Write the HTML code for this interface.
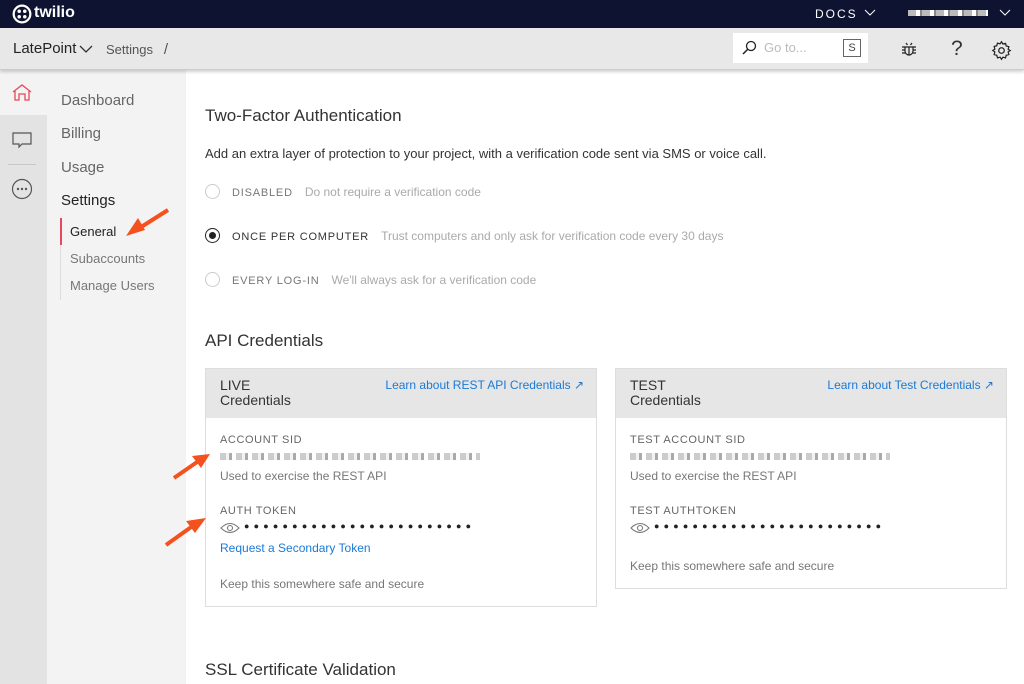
<!DOCTYPE html>
<html><head><meta charset="utf-8"><style>
*{margin:0;padding:0;box-sizing:border-box}
body{width:1024px;height:684px;overflow:hidden;font-family:"Liberation Sans",sans-serif;background:#fff;position:relative;color:#222}
.abs{position:absolute}
#top{left:0;top:0;width:1024px;height:28px;background:#0e1332}
#bar{left:0;top:28px;width:1024px;height:42px;background:#e8e8e8;border-bottom:1px solid #ccc;box-shadow:0 2px 3px rgba(0,0,0,.18);z-index:2}
#rail{left:0;top:70px;width:47px;height:614px;background:#e3e3e3}
#side{left:47px;top:70px;width:139px;height:614px;background:#f3f3f3}
.nav{position:absolute;left:61px;font-size:15px;color:#666}
.sub{position:absolute;left:70px;font-size:13px;color:#777}
.h{position:absolute;left:205px;font-size:17px;color:#333}
.radio{position:absolute;left:205px;width:15px;height:15px;border:1px solid #ccc;border-radius:50%}
.rl{position:absolute;left:232px;font-size:11px;letter-spacing:.8px;color:#777}
.rd{font-size:12px;color:#aaa;letter-spacing:0;margin-left:12px}
.card{position:absolute;top:368px;border:1px solid #ddd;background:#fff}
.ch{height:49px;background:#e6e6e6;position:relative}
.ct{position:absolute;left:14px;top:9px;font-size:14px;color:#333;line-height:15px}
.cl{position:absolute;right:12px;top:9px;font-size:12px;color:#1a7ad6}
.lab{position:absolute;left:14px;font-size:11px;color:#666;letter-spacing:.6px}
.tx{position:absolute;left:14px;font-size:12px;color:#777}
.dots{position:absolute;left:38px;font-size:9px;letter-spacing:4.2px;color:#222}
.blur{position:absolute;left:14px;height:7px;width:260px;background:repeating-linear-gradient(90deg,#ccc 0 6px,#f2f2f2 6px 9px,#aaa 9px 12px,#fff 12px 16px)}
</style></head><body>
<div id="top" class="abs">
 <svg class="abs" style="left:12px;top:4px" width="20" height="20" viewBox="0 0 18 18"><circle cx="9" cy="9" r="7.5" fill="none" stroke="#fff" stroke-width="2"/><circle cx="6.5" cy="6.5" r="1.6" fill="#fff"/><circle cx="11.5" cy="6.5" r="1.6" fill="#fff"/><circle cx="6.5" cy="11.5" r="1.6" fill="#fff"/><circle cx="11.5" cy="11.5" r="1.6" fill="#fff"/></svg>
 <div class="abs" style="left:34px;top:4px;color:#fff;font-weight:bold;font-size:16px">twilio</div>
 <div class="abs" style="left:815px;top:7px;color:#fff;font-size:12px;letter-spacing:2px">DOCS</div>
 <svg class="abs" style="left:864px;top:9px" width="12" height="8"><path d="M1 1l5 5 5-5" stroke="#fff" fill="none"/></svg>
 <div class="abs" style="left:908px;top:10px;width:80px;height:6px;background:repeating-linear-gradient(90deg,#bbb 0 8px,#fff 8px 12px,#888 12px 14px)"></div>
 <svg class="abs" style="left:999px;top:9px" width="12" height="8"><path d="M1 1l5 5 5-5" stroke="#fff" fill="none"/></svg>
</div>
<div id="bar" class="abs">
 <div class="abs" style="left:13px;top:12px;font-size:15px;color:#222">LatePoint</div>
 <svg class="abs" style="left:79px;top:17px" width="14" height="9"><path d="M1 1l6 6 6-6" stroke="#333" fill="none" stroke-width="1.3"/></svg>
 <div class="abs" style="left:106px;top:13px;font-size:13px;color:#555">Settings&nbsp;&nbsp;&nbsp;<span style="font-size:15px">/</span></div>
 <div class="abs" style="left:733px;top:5px;width:135px;height:30px;background:#fff">
  <svg class="abs" style="left:8px;top:7px" width="16" height="16"><circle cx="10" cy="6" r="4.5" fill="none" stroke="#222" stroke-width="1.3"/><path d="M7 9l-5 5" stroke="#222" stroke-width="1.5"/></svg>
  <div class="abs" style="left:31px;top:7px;font-size:13px;color:#bbb">Go to...</div>
  <div class="abs" style="left:110px;top:6px;width:18px;height:18px;border:1px solid #666;font-size:11px;text-align:center;line-height:16px;color:#444">S</div>
 </div>
 <svg class="abs" style="left:899px;top:11px" width="20" height="20" viewBox="0 0 20 20" fill="none" stroke="#222" stroke-width="1.2"><path d="M7 4l1.5 2M13 4l-1.5 2"/><path d="M6 8h8v4a4 4 0 0 1-8 0z"/><path d="M3 8h3M14 8h3M3 11h3M14 11h3M3 14h3M14 14h3M10 8v8"/></svg>
 <div class="abs" style="left:951px;top:9px;font-size:21px;color:#333">?</div>
 <svg class="abs" style="left:991px;top:12px" width="21" height="21" viewBox="0 0 24 24" fill="none" stroke="#222" stroke-width="1.4"><circle cx="12" cy="12" r="3.2"/><path d="M12 2l1.6 2.6 3-.8.8 3 3 .8-.8 3L22 12l-2.4 1.6.8 3-3 .8-.8 3-3-.8L12 22l-1.6-2.4-3 .8-.8-3-3-.8.8-3L2 12l2.4-1.6-.8-3 3-.8.8-3 3 .8z"/></svg>
</div>
<div id="rail" class="abs">
 <div class="abs" style="left:0;top:0;width:47px;height:45px;background:#f3f3f3"></div>
 <svg class="abs" style="left:11px;top:13px" width="22" height="20" viewBox="0 0 22 20" fill="none" stroke="#e8485c" stroke-width="1.3"><path d="M2 9L11 2l9 7M4 8v9h4v-6h6v6h4V8"/></svg>
 <svg class="abs" style="left:11px;top:60px" width="22" height="20" viewBox="0 0 22 20" fill="none" stroke="#555" stroke-width="1.2"><path d="M2 3h18v11h-9l-3 3v-3H2z"/></svg>
 <div class="abs" style="left:8px;top:94px;width:28px;border-top:1px solid #c8c8c8"></div>
 <svg class="abs" style="left:11px;top:108px" width="22" height="22"><circle cx="11" cy="11" r="9.5" fill="none" stroke="#555" stroke-width="1.2"/><circle cx="7" cy="11" r="1.2" fill="#555"/><circle cx="11" cy="11" r="1.2" fill="#555"/><circle cx="15" cy="11" r="1.2" fill="#555"/></svg>
</div>
<div id="side" class="abs"></div>
<div class="nav" style="top:92px">Dashboard</div>
<div class="nav" style="top:125px">Billing</div>
<div class="nav" style="top:159px">Usage</div>
<div class="nav" style="top:192px;color:#222">Settings</div>
<div class="abs" style="left:60px;top:218px;height:82px;border-left:1px solid #ddd"></div>
<div class="abs" style="left:60px;top:218px;height:27px;border-left:2px solid #e8485c"></div>
<div class="sub" style="top:224px;color:#222">General</div>
<div class="sub" style="top:251px">Subaccounts</div>
<div class="sub" style="top:278px">Manage Users</div>
<svg class="abs" style="left:120px;top:205px" width="52" height="35" viewBox="0 0 52 35"><path d="M48 5L18 24" stroke="#f4511e" stroke-width="4"/><path d="M6 31l12-18 7 12z" fill="#f4511e"/></svg>

<div class="h" style="top:106px">Two-Factor Authentication</div>
<div class="abs" style="left:205px;top:146px;font-size:13px;color:#333">Add an extra layer of protection to your project, with a verification code sent via SMS or voice call.</div>
<div class="radio" style="top:184px"></div><div class="rl" style="top:185px">DISABLED<span class="rd">Do not require a verification code</span></div>
<div class="radio" style="top:228px;border-color:#222"><div class="abs" style="left:3px;top:3px;width:7px;height:7px;border-radius:50%;background:#222"></div></div><div class="rl" style="top:229px;color:#333">ONCE PER COMPUTER<span class="rd">Trust computers and only ask for verification code every 30 days</span></div>
<div class="radio" style="top:272px"></div><div class="rl" style="top:273px">EVERY LOG-IN<span class="rd">We'll always ask for a verification code</span></div>

<div class="h" style="top:331px">API Credentials</div>
<div class="card" style="left:205px;width:392px;height:239px">
 <div class="ch"><div class="ct">LIVE<br>Credentials</div><div class="cl">Learn about REST API Credentials ↗</div></div>
 <div class="lab" style="top:65px">ACCOUNT SID</div>
 <div class="blur" style="top:84px"></div>
 <div class="tx" style="top:100px">Used to exercise the REST API</div>
 <div class="lab" style="top:136px">AUTH TOKEN</div>
 <svg class="abs" style="left:14px;top:153px" width="20" height="12"><path d="M1 6Q10-3 19 6Q10 15 1 6z" fill="none" stroke="#777" stroke-width="1.1"/><circle cx="10" cy="6" r="2.5" fill="none" stroke="#777" stroke-width="1.1"/></svg>
 <div class="dots" style="top:152px">●●●●●●●●●●●●●●●●●●●●●●●●</div>
 <div class="tx" style="top:172px;color:#1a7ad6">Request a Secondary Token</div>
 <div class="tx" style="top:208px">Keep this somewhere safe and secure</div>
</div>
<div class="card" style="left:615px;width:392px;height:221px">
 <div class="ch"><div class="ct">TEST<br>Credentials</div><div class="cl">Learn about Test Credentials ↗</div></div>
 <div class="lab" style="top:65px">TEST ACCOUNT SID</div>
 <div class="blur" style="top:84px"></div>
 <div class="tx" style="top:100px">Used to exercise the REST API</div>
 <div class="lab" style="top:136px">TEST AUTHTOKEN</div>
 <svg class="abs" style="left:14px;top:153px" width="20" height="12"><path d="M1 6Q10-3 19 6Q10 15 1 6z" fill="none" stroke="#777" stroke-width="1.1"/><circle cx="10" cy="6" r="2.5" fill="none" stroke="#777" stroke-width="1.1"/></svg>
 <div class="dots" style="top:152px">●●●●●●●●●●●●●●●●●●●●●●●●</div>
 <div class="tx" style="top:190px">Keep this somewhere safe and secure</div>
</div>
<svg class="abs" style="left:170px;top:450px" width="45" height="32"><path d="M4 28L30 10" stroke="#f4511e" stroke-width="4"/><path d="M40 4L22 6l9 12z" fill="#f4511e"/></svg>
<svg class="abs" style="left:162px;top:513px" width="50" height="36"><path d="M4 32L32 12" stroke="#f4511e" stroke-width="4"/><path d="M44 5L24 8l9 12z" fill="#f4511e"/></svg>
<div class="h" style="top:660px">SSL Certificate Validation</div>
</body></html>
